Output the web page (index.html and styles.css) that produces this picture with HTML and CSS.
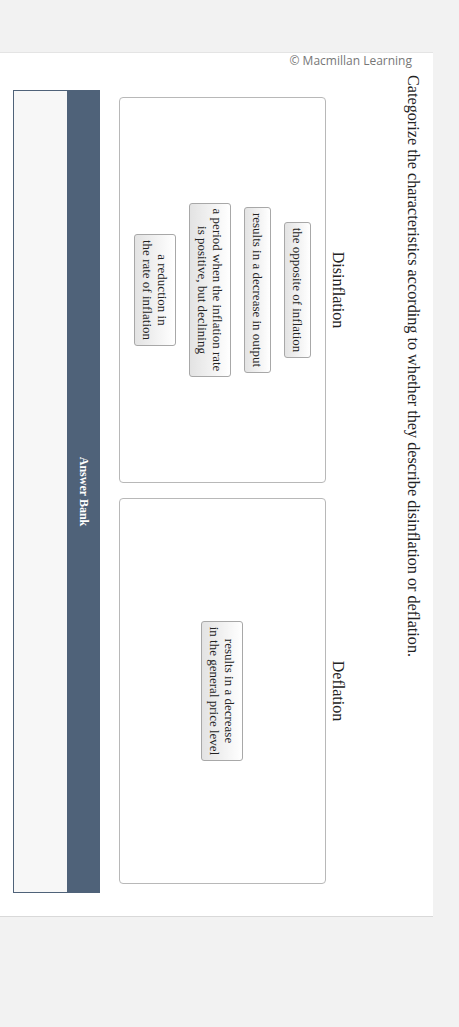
FILE: index.html
```html
<!DOCTYPE html>
<html>
<head>
<meta charset="utf-8">
<link rel="stylesheet" href="styles.css">
</head>
<body>
<div class="panel">
  <div class="copyright">© Macmillan Learning</div>
  <div class="rot-frame">
    <div class="rot-inner">
      <div class="title">Categorize the characteristics according to whether they describe disinflation or deflation.</div>
      <div class="columns">
        <div class="column">
          <div class="heading">Disinflation</div>
          <div class="dropbox">
            <div class="card">the opposite of inflation</div>
            <div class="card">results in a decrease in output</div>
            <div class="card">a period when the inflation rate<br>is positive, but declining</div>
            <div class="card">a reduction in<br>the rate of inflation</div>
          </div>
        </div>
        <div class="column">
          <div class="heading">Deflation</div>
          <div class="dropbox">
            <div class="card">results in a decrease<br>in the general price level</div>
          </div>
        </div>
      </div>
      <div class="bank">
        <div class="bank-head">Answer Bank</div>
        <div class="bank-body"></div>
      </div>
    </div>
  </div>
</div>
</body>
</html>
```
FILE: styles.css
```css
html, body {
  margin: 0;
  padding: 0;
  background: #f2f2f2;
}
body {
  padding-top: 52px;
  height: 975px;
  overflow: hidden;
}
.panel {
  width: 433px;
  background: #ffffff;
  border-top: 1px solid #e4e4e4;
  border-bottom: 1px solid #d9d9d9;
  padding-bottom: 4px;
}
.copyright {
  font-family: "Open Sans", sans-serif;
  font-size: 12px;
  line-height: 16px;
  height: 17px;
  color: #777777;
  text-align: right;
  padding-right: 21px;
}
.rot-frame {
  width: 433px;
  height: 842px;
}
.rot-inner {
  width: 842px;
  height: 433px;
  transform-origin: 0 0;
  transform: translateX(433px) rotate(90deg);
  font-family: "Liberation Serif", "Times New Roman", serif;
  color: #222222;
  box-sizing: border-box;
  padding-top: 11px;
}
.title {
  font-size: 16.2px;
  line-height: 18px;
  padding-left: 5px;
  white-space: nowrap;
}
.columns {
  display: flex;
  gap: 15px;
  margin-left: 27px;
  margin-top: 57px;
}
.column {
  width: 386px;
}
.heading {
  font-size: 16px;
  line-height: 18px;
  text-align: center;
  margin-bottom: 3px;
}
.dropbox {
  box-sizing: border-box;
  height: 207px;
  border: 1px solid #b8b8b8;
  border-radius: 4px;
  display: flex;
  flex-direction: column;
  align-items: center;
  justify-content: center;
  gap: 13px;
}
.card {
  font-size: 13px;
  line-height: 15px;
  text-align: center;
  padding: 5px;
  border: 1px solid #a8a8a8;
  border-radius: 3px;
  background: linear-gradient(to bottom, #ffffff, #e3e3e3);
  white-space: nowrap;
}
.bank {
  margin-top: 19px;
  margin-left: 20px;
  width: 803px;
}
.bank-head {
  height: 33px;
  line-height: 33px;
  background: #4f6279;
  color: #ffffff;
  font-weight: bold;
  font-size: 12px;
  text-align: center;
}
.bank-body {
  box-sizing: border-box;
  height: 54px;
  background: #f7f7f7;
  border: 1px solid #4f6279;
  border-top: none;
}
```
